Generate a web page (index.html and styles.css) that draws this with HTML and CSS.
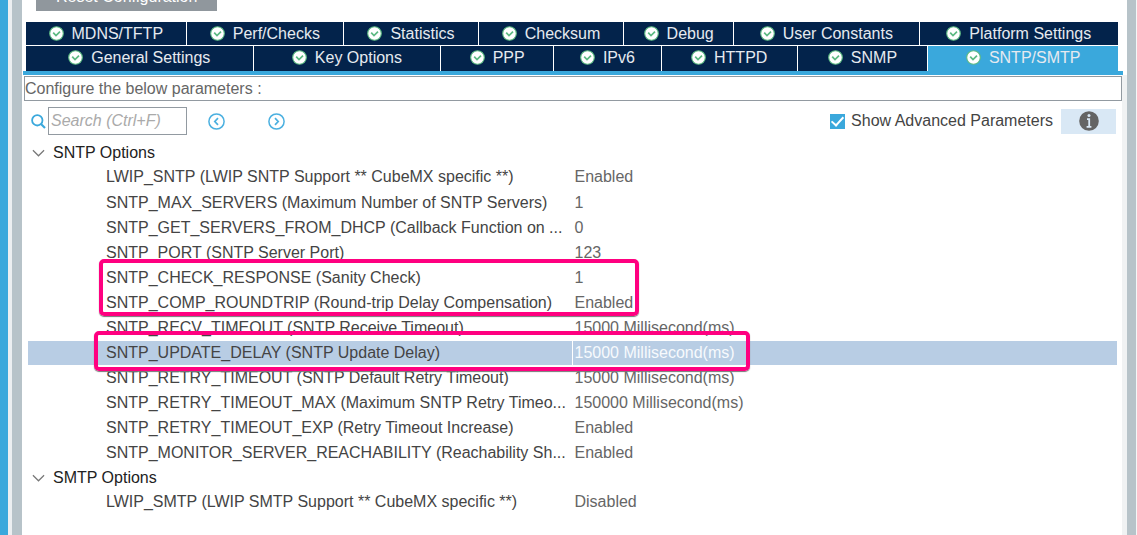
FILE: index.html
```html
<!DOCTYPE html>
<html lang="en">
<head>
<meta charset="utf-8">
<title>LWIP Configuration</title>
<link rel="stylesheet" href="styles.css">
</head>
<body>
<svg class="sprite" aria-hidden="true">
  <symbol id="ok" viewBox="0 0 15 15">
    <circle cx="7.5" cy="7.5" r="6.8" fill="#fff" stroke="#5cba82" stroke-width="1.1"/>
    <path d="M4.2 6.6 7 9.5 11 5.6" fill="none" stroke="#5cba82" stroke-width="1.7"/>
  </symbol>
  <symbol id="chevron" viewBox="0 0 14 8">
    <path d="M1 1 7 7 13 1" fill="none" stroke="#777" stroke-width="1.3"/>
  </symbol>
</svg>
<div class="window">
  <main class="panel">
    <header class="top"><button class="reset" type="button">Reset Configuration</button></header>
    <nav class="tabs">
      <div class="tab-row tab-row-back">
        <button class="tab" type="button"><svg class="ok"><use href="#ok"/></svg>MDNS/TFTP</button>
        <button class="tab" type="button"><svg class="ok"><use href="#ok"/></svg>Perf/Checks</button>
        <button class="tab" type="button"><svg class="ok"><use href="#ok"/></svg>Statistics</button>
        <button class="tab" type="button"><svg class="ok"><use href="#ok"/></svg>Checksum</button>
        <button class="tab" type="button"><svg class="ok"><use href="#ok"/></svg>Debug</button>
        <button class="tab" type="button"><svg class="ok"><use href="#ok"/></svg>User Constants</button>
        <button class="tab" type="button"><svg class="ok"><use href="#ok"/></svg>Platform Settings</button>
      </div>
      <div class="tab-row tab-row-front">
        <button class="tab" type="button"><svg class="ok"><use href="#ok"/></svg>General Settings</button>
        <button class="tab" type="button"><svg class="ok"><use href="#ok"/></svg>Key Options</button>
        <button class="tab" type="button"><svg class="ok"><use href="#ok"/></svg>PPP</button>
        <button class="tab" type="button"><svg class="ok"><use href="#ok"/></svg>IPv6</button>
        <button class="tab" type="button"><svg class="ok"><use href="#ok"/></svg>HTTPD</button>
        <button class="tab" type="button"><svg class="ok"><use href="#ok"/></svg>SNMP</button>
        <button class="tab active" type="button"><svg class="ok"><use href="#ok"/></svg>SNTP/SMTP</button>
      </div>
    </nav>
    <section class="content">
      <p class="caption">Configure the below parameters :</p>
      <div class="toolbar">
        <label class="search-label" for="search" aria-label="Search">
          <svg class="lens" viewBox="0 0 15 15"><circle cx="6.3" cy="6.3" r="5.2" fill="none" stroke="#3aa8dc" stroke-width="1.8"/><path d="M10 10 14 14" stroke="#3aa8dc" stroke-width="2.2"/></svg>
        </label>
        <input class="search" id="search" type="text" placeholder="Search (Ctrl+F)">
        <button class="step" type="button" aria-label="Previous"><svg class="step-icon" viewBox="0 0 17 17"><circle cx="8.5" cy="8.5" r="7.6" fill="none" stroke="#4bb0e0" stroke-width="1.5"/><path d="M10 5.2 6.8 8.5 10 11.8" fill="none" stroke="#4bb0e0" stroke-width="1.7"/></svg></button>
        <button class="step" type="button" aria-label="Next"><svg class="step-icon" viewBox="0 0 17 17"><circle cx="8.5" cy="8.5" r="7.6" fill="none" stroke="#4bb0e0" stroke-width="1.5"/><path d="M7 5.2 10.2 8.5 7 11.8" fill="none" stroke="#4bb0e0" stroke-width="1.7"/></svg></button>
        <label class="advanced"><input class="check" type="checkbox" checked>Show Advanced Parameters</label>
        <button class="info" type="button" aria-label="Information"><svg class="info-icon" viewBox="0 0 20 20"><circle cx="10" cy="10" r="9.8" fill="#646464"/><circle cx="10" cy="4.6" r="1.5" fill="#d9e8f5"/><path d="M8 8.2H10.2V15.6M7.6 15.8H12.4" fill="none" stroke="#d9e8f5" stroke-width="1.8"/></svg></button>
      </div>
      <div class="tree">
        <table class="params">
          <colgroup><col class="name-col"><col></colgroup>
          <tbody>
            <tr><th colspan="2"><button class="group" type="button"><svg class="chevron"><use href="#chevron"/></svg>SNTP Options</button></th></tr>
            <tr><td>LWIP_SNTP (LWIP SNTP Support ** CubeMX specific **)</td><td>Enabled</td></tr>
            <tr><td>SNTP_MAX_SERVERS (Maximum Number of SNTP Servers)</td><td>1</td></tr>
            <tr><td>SNTP_GET_SERVERS_FROM_DHCP (Callback Function on ...</td><td>0</td></tr>
            <tr><td>SNTP_PORT (SNTP Server Port)</td><td>123</td></tr>
            <tr><td>SNTP_CHECK_RESPONSE (Sanity Check)</td><td>1</td></tr>
            <tr><td>SNTP_COMP_ROUNDTRIP (Round-trip Delay Compensation)</td><td>Enabled</td></tr>
            <tr><td>SNTP_RECV_TIMEOUT (SNTP Receive Timeout)</td><td>15000 Millisecond(ms)</td></tr>
            <tr class="selected"><td>SNTP_UPDATE_DELAY (SNTP Update Delay)</td><td>15000 Millisecond(ms)</td></tr>
            <tr><td>SNTP_RETRY_TIMEOUT (SNTP Default Retry Timeout)</td><td>15000 Millisecond(ms)</td></tr>
            <tr><td>SNTP_RETRY_TIMEOUT_MAX (Maximum SNTP Retry Timeo...</td><td>150000 Millisecond(ms)</td></tr>
            <tr><td>SNTP_RETRY_TIMEOUT_EXP (Retry Timeout Increase)</td><td>Enabled</td></tr>
            <tr><td>SNTP_MONITOR_SERVER_REACHABILITY (Reachability Sh...</td><td>Enabled</td></tr>
          </tbody>
          <tbody>
            <tr><th colspan="2"><button class="group" type="button"><svg class="chevron"><use href="#chevron"/></svg>SMTP Options</button></th></tr>
            <tr><td>LWIP_SMTP (LWIP SMTP Support ** CubeMX specific **)</td><td>Disabled</td></tr>
          </tbody>
        </table>
        <div class="mark mark-check"></div>
        <div class="mark mark-delay"></div>
      </div>
    </section>
  </main>
</div>
</body>
</html>
```
FILE: styles.css
```css
* { box-sizing: border-box; }

body {
  margin: 0;
  background: #fff;
  color: #444;
  font: 16px/20px "Liberation Sans", Arial, sans-serif;
}

button, input { font: inherit; color: inherit; }
button { border: 0; padding: 0; background: none; }
.sprite { display: none; }

.window {
  display: flex;
  height: 100vh;
  overflow: hidden;
  border-left: 8px solid #3aa8dc;
  border-right: 1px solid #f4f6f7;
  padding-left: 4px;
  background: #eceff1;
}

.panel {
  flex: 1;
  display: flex;
  flex-direction: column;
  min-width: 0;
  border-left: 10px solid #b7c3c9;
  border-right: 9px solid #b7c3c9;
  background: #fff;
}

.top { height: 22px; flex: none; display: flex; align-items: flex-start; padding-left: 14px; }
.reset {
  height: 32px;
  margin-top: -21px;
  padding: 3px 20px 0;
  background: #90979d;
  color: #fff;
}

.tabs {
  margin: 0 4px 0 1px;
  border-bottom: 4px solid #3aa8dc;
  padding: 0 5px 0 3px;
}
.tab-row { display: grid; gap: 1px; }
.tab-row-back {
  grid-template-columns: 160fr 157fr 134fr 145fr 109fr 185fr 199fr;
  height: 23px;
  margin-bottom: 1px;
}
.tab-row-front {
  grid-template-columns: 227fr 187fr 112fr 107fr 135fr 130fr 190fr;
  height: 25px;
}
.tab {
  display: flex;
  align-items: center;
  justify-content: center;
  gap: 8px;
  min-width: 0;
  background: #03234b;
  color: #e6eaf0;
  white-space: nowrap;
}
.tab-row-front .tab { padding-bottom: 2px; }
.tab.active { background: #3aa8dc; }
.ok { width: 15px; height: 15px; flex: none; }

.content { flex: 1; border-right: 5px solid #f0f2f3; padding: 1px 0 0 2px; }
.caption {
  margin: 0;
  height: 25px;
  border: 1px solid #929aa1;
  line-height: 24px;
  color: #666;
}

.toolbar {
  display: flex;
  align-items: center;
  height: 28px;
  margin: 6px 6px 5px 7px;
}
.search-label, .lens { display: block; width: 15px; height: 15px; }
.search {
  width: 139px;
  height: 28px;
  margin: 0 21px 0 2px;
  border: 1px solid #929aa1;
  padding: 0 2px;
  background: #fff;
}
.search::placeholder { color: #aaa; font-style: italic; opacity: 1; }
.step { width: 18px; height: 18px; margin-right: 42px; }
.step-icon { display: block; width: 17px; height: 17px; }
.advanced { display: flex; align-items: center; gap: 6px; margin-left: auto; }
.check {
  appearance: none;
  width: 15px;
  height: 15px;
  margin: 0;
  background: #3aa8dc;
  display: grid;
  place-items: center;
}
.check:checked::before {
  content: "";
  width: 5px;
  height: 10px;
  margin-bottom: 2px;
  border: solid #fff;
  border-width: 0 2px 2px 0;
  transform: rotate(42deg);
}
.info {
  display: grid;
  place-items: center;
  width: 55px;
  height: 25px;
  margin-left: 8px;
  background: #d9e8f5;
}
.info-icon { width: 20px; height: 20px; }

.tree { position: relative; padding: 0 5px 0 4px; }
.params { width: 100%; border-collapse: collapse; table-layout: fixed; }
.name-col { width: 544px; }
.params tr { height: 25px; }
.params th { padding: 0; text-align: left; font-weight: normal; color: #222; }
.params td {
  padding: 0 0 0 78px;
  border-bottom: 1px solid #fff;
  white-space: nowrap;
}
.params td + td { padding-left: 2px; border-left: 1px solid #fff; color: #666; }
.params .selected { background: #b8cde4; }
.params .selected td + td { color: #f7fafd; }
.group { display: flex; align-items: center; gap: 8px; padding-left: 4px; }
.chevron { width: 13px; height: 8px; }

.mark {
  position: absolute;
  border: 4px solid #ff0080;
  border-radius: 5px;
  box-shadow: 0 1px 1px #777;
}
.mark-check { left: 75px; top: 119px; width: 540px; height: 57px; }
.mark-delay { left: 70px; top: 191px; width: 656px; height: 40px; }
```
